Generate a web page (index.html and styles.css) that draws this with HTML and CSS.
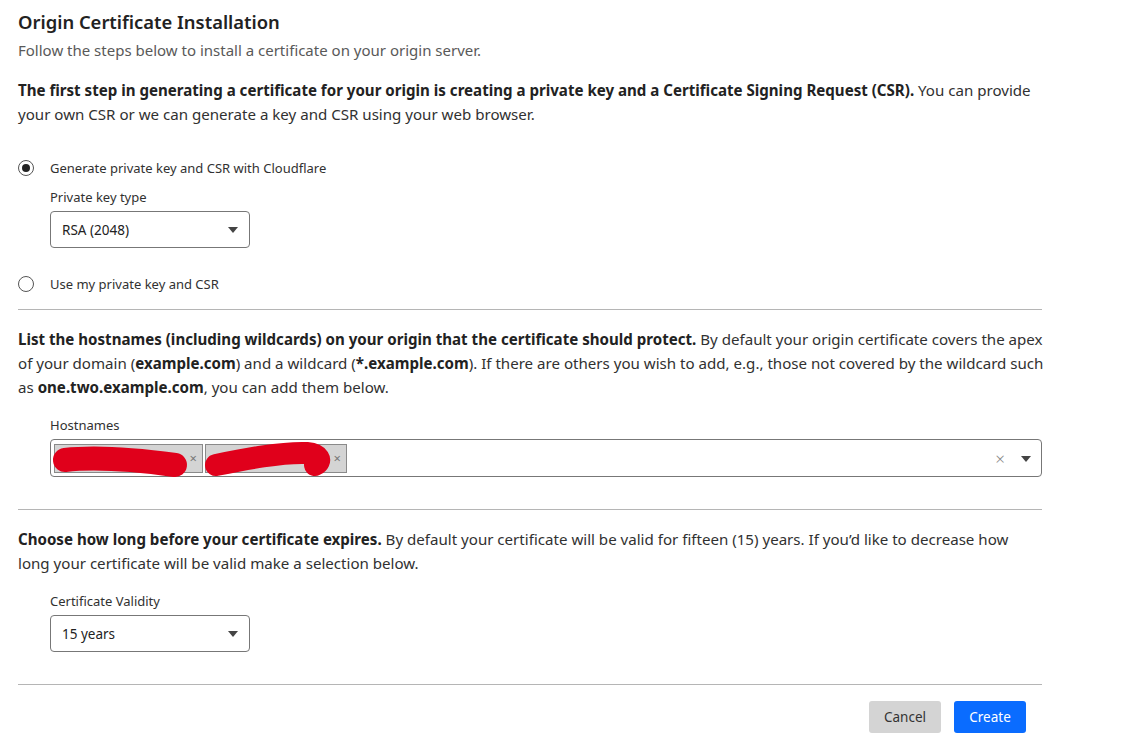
FILE: index.html
```html
<!DOCTYPE html>
<html>
<head>
<meta charset="utf-8">
<link rel="stylesheet" href="styles.css">
</head>
<body>
<div class="page">
  <h1 class="title">Origin Certificate Installation</h1>
  <p class="subtitle">Follow the steps below to install a certificate on your origin server.</p>

  <section class="section">
    <p class="para"><strong>The first step in generating a certificate for your origin is creating a private key and a Certificate Signing Request (CSR).</strong> You can provide<br>your own CSR or we can generate a key and CSR using your web browser.</p>

    <div class="radios">
      <label class="radio-row">
        <span class="radio checked"></span>
        <span class="radio-label">Generate private key and CSR with Cloudflare</span>
      </label>
      <div class="field nested">
        <div class="field-label">Private key type</div>
        <div class="select">
          <span>RSA (2048)</span>
          <span class="caret"></span>
        </div>
      </div>
      <label class="radio-row second">
        <span class="radio"></span>
        <span class="radio-label">Use my private key and CSR</span>
      </label>
    </div>
  </section>

  <hr class="rule r1">

  <section class="section">
    <p class="para after-rule"><strong>List the hostnames (including wildcards) on your origin that the certificate should protect.</strong> By default your origin certificate covers the apex<br>of your domain (<strong>example.com</strong>) and a wildcard (<strong>*.example.com</strong>). If there are others you wish to add, e.g., those not covered by the wildcard such<br>as <strong>one.two.example.com</strong>, you can add them below.</p>

    <div class="field nested hostfield">
      <div class="field-label">Hostnames</div>
      <div class="multi">
        <div class="tags">
          <span class="tag tag1"><span class="tag-x">×</span></span>
          <span class="tag tag2"><span class="tag-x">×</span></span>
        </div>
        <div class="multi-ctrls">
          <span class="clear">×</span>
          <span class="caret"></span>
        </div>
        <svg class="redact" width="300" height="44" viewBox="0 0 300 44">
          <path d="M14 23 C 40 20, 80 22, 124 28" stroke="#e0001b" stroke-width="24" stroke-linecap="round" fill="none"/>
          <path d="M165 28 C 195 22, 230 15, 256 16 C 268 17, 272 24, 264 28" stroke="#e0001b" stroke-width="22" stroke-linecap="round" fill="none"/>
        </svg>
      </div>
    </div>
  </section>

  <hr class="rule r2">

  <section class="section">
    <p class="para after-rule"><strong>Choose how long before your certificate expires.</strong> By default your certificate will be valid for fifteen (15) years. If you’d like to decrease how<br>long your certificate will be valid make a selection below.</p>
    <div class="field nested validity">
      <div class="field-label">Certificate Validity</div>
      <div class="select">
        <span>15 years</span>
        <span class="caret"></span>
      </div>
    </div>
  </section>

  <hr class="rule r3">

  <div class="actions">
    <button class="btn btn-cancel">Cancel</button>
    <button class="btn btn-create">Create</button>
  </div>
</div>
</body>
</html>
```
FILE: styles.css
```css
* { box-sizing: border-box; }
body {
  margin: 0;
  background: #fff;
  font-family: "Noto Sans", "Open Sans", sans-serif;
  color: #313131;
}
.page {
  width: 1042px;
  padding: 8px 0 0 18px;
}
.title {
  margin: 0;
  font-size: 18.4px;
  font-weight: 600;
  line-height: 28px;
  color: #222;
}
.subtitle {
  margin: 3px 0 0;
  font-size: 15px;
  line-height: 22px;
  color: #595959;
}
.para {
  margin: 17px 0 0;
  font-size: 15.1px;
  line-height: 24px;
  color: #313131;
  white-space: nowrap;
}
.para strong { font-weight: 700; color: #222; }
.para.after-rule { margin-top: 17px; }
.radios { margin-top: 31px; }
.radio-row {
  display: flex;
  align-items: center;
  gap: 16px;
  height: 22px;
}
.radio {
  width: 16px;
  height: 16px;
  border: 1px solid #555;
  border-radius: 50%;
  display: flex;
  align-items: center;
  justify-content: center;
}
.radio.checked::after {
  content: "";
  width: 8px;
  height: 8px;
  border-radius: 50%;
  background: #222;
}
.radio-label { font-size: 13px; color: #313131; }
.field.nested { margin-left: 32px; }
.radios .field { margin-top: 8px; }
.field-label {
  font-size: 13px;
  line-height: 20px;
  color: #313131;
  margin-bottom: 4px;
}
.select {
  width: 200px;
  height: 37px;
  border: 1px solid #777;
  border-radius: 4px;
  display: flex;
  align-items: center;
  justify-content: space-between;
  padding: 0 11px 0 11px;
  font-size: 13.5px;
  color: #222;
}
.caret {
  width: 0;
  height: 0;
  border-left: 5px solid transparent;
  border-right: 5px solid transparent;
  border-top: 6px solid #444;
  margin-top: 1px;
}
.radio-row.second { margin-top: 25px; }
.rule {
  margin: 0;
  border: 0;
  border-top: 1px solid #b5b5b5;
  width: 1024px;
}
.rule.r1 { margin-top: 14px; }
.rule.r2 { margin-top: 32px; }
.rule.r3 { margin-top: 32px; }
.hostfield { margin-top: 16px; }
.validity { margin-top: 16px; }
.multi {
  position: relative;
  width: 992px;
  height: 38px;
  border: 1px solid #777;
  border-radius: 4px;
  display: flex;
  align-items: center;
  justify-content: space-between;
  padding: 0 10px 0 3px;
}
.tags { display: flex; gap: 2px; }
.tag {
  height: 29px;
  background: #d4d4d4;
  border: 1px solid #8a8a8a;
  display: flex;
  align-items: center;
  justify-content: flex-end;
  padding-right: 5px;
}
.tag1 { width: 149px; }
.tag2 { width: 142px; }
.tag-x { font-size: 13px; color: #777; }
.multi-ctrls { display: flex; align-items: center; gap: 16px; }
.clear { font-size: 17px; color: #888; line-height: 1; font-weight: 300; }
.redact {
  position: absolute;
  left: 0;
  top: -3px;
}
.actions {
  display: flex;
  justify-content: flex-end;
  gap: 13px;
  padding-right: 16px;
  margin-top: 16px;
}
.btn {
  height: 32px;
  width: 72px;
  border: 0;
  border-radius: 3px;
  font-family: inherit;
  font-size: 13.5px;
}
.btn-cancel { background: #d4d4d4; color: #333; }
.btn-create { background: #0a6cff; color: #fff; }
```
